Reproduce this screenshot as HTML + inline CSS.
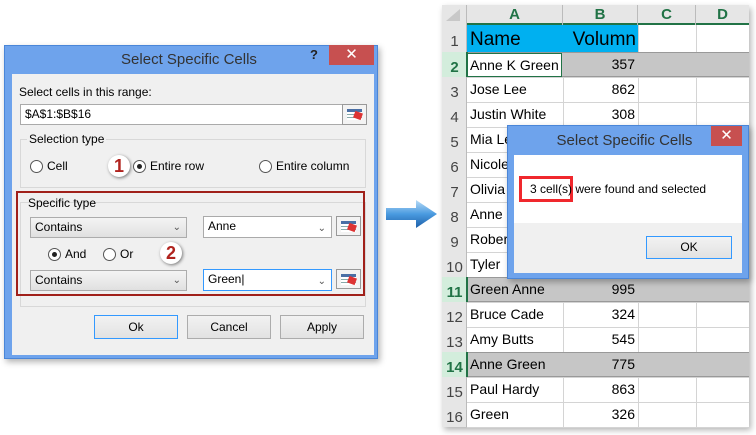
<!DOCTYPE html><html><head><style>
*{box-sizing:border-box;margin:0;padding:0}
body{width:756px;height:435px;background:#fff;position:relative;overflow:hidden;font-family:"Liberation Sans",sans-serif;font-size:12px;color:#000}
.a{position:absolute}
.sh{box-shadow:2px 3px 6px rgba(0,0,0,.3)}
.cell{font-size:14px;line-height:25px;padding-left:3px;white-space:nowrap;overflow:hidden}
.rh{color:#444;font-size:15px;text-align:center}
.num{text-align:right;padding-right:3px}
.rad{position:absolute;width:13px;height:13px;border:1px solid #555;border-radius:50%;background:#fff}
.rad.on::after{content:"";position:absolute;left:3px;top:3px;width:5px;height:5px;border-radius:50%;background:#222}
.inp{position:absolute;background:#fff;border:1px solid #aaa;padding-left:4px;line-height:19px}
.dd{position:absolute;background:linear-gradient(#f4f4f4,#e0e0e0);border:1px solid #acacac;padding-left:4px;line-height:19px}
.btn{position:absolute;background:linear-gradient(#f2f2f2,#e2e2e2);border:1px solid #acacac;text-align:center;line-height:22px}
.ic{position:absolute;width:25px;height:20px;border:1px solid #999;background:#f3f3f3}
.ic i{position:absolute;left:4px;top:4px;width:15px;height:11px;background:linear-gradient(#4a6fa5 0 3px,#fff 3px 5px,#8aa 5px 6px,#fff 6px 8px,#8aa 8px 9px,#fff 9px)}
.ic b{position:absolute;left:11px;top:7px;width:8px;height:7px;background:#d33;transform:rotate(20deg)}
.badge{position:absolute;width:22px;height:22px;border-radius:50%;background:#fff;box-shadow:1px 1px 3px rgba(0,0,0,.5);color:#b0231e;font-size:18px;font-weight:bold;text-align:center;line-height:22px}
.chev{position:absolute;right:5px;top:0;color:#555;font-size:10px}
</style></head><body>

<div class="a sh" style="left:442px;top:5px;width:307px;height:422px;background:#fff"></div>
<div class="a" style="left:442px;top:5px;width:307px;height:20px;background:#e6e6e6;border-bottom:2px solid #217346"></div>
<div class="a" style="left:442px;top:5px;width:25px;height:422px;background:#e6e6e6;border-right:1px solid #bbb"></div>
<div class="a" style="left:446px;top:9px;width:0;height:0;border-left:14px solid transparent;border-bottom:12px solid #c8c8c8"></div>
<div class="a" style="left:467px;top:5px;width:96px;line-height:20px;text-align:center;color:#217346;font-size:15px;font-weight:bold;border-right:1px solid #bbb">A</div>
<div class="a" style="left:563px;top:5px;width:75px;line-height:20px;text-align:center;color:#217346;font-size:15px;font-weight:bold;border-right:1px solid #bbb">B</div>
<div class="a" style="left:638px;top:5px;width:58px;line-height:20px;text-align:center;color:#217346;font-size:15px;font-weight:bold;border-right:1px solid #bbb">C</div>
<div class="a" style="left:696px;top:5px;width:53px;line-height:20px;text-align:center;color:#217346;font-size:15px;font-weight:bold">D</div>
<div class="a" style="left:467px;top:25px;width:171px;height:27px;background:#00b0f0"></div>
<div class="a" style="left:470px;top:25px;font-size:19px;line-height:29px">Name</div>
<div class="a" style="left:563px;top:25px;width:73px;font-size:19px;line-height:29px;text-align:right">Volumn</div>
<div class="a rh" style="left:442px;top:25px;width:25px;line-height:34px">1</div>
<div class="a" style="left:467px;top:52px;width:282px;height:1px;background:#ccc"></div>
<div class="a" style="left:638px;top:25px;width:1px;height:402px;background:#d4d4d4"></div>
<div class="a" style="left:696px;top:25px;width:1px;height:402px;background:#d4d4d4"></div>
<div class="a" style="left:563px;top:52px;width:1px;height:375px;background:#d4d4d4"></div>
<div id="rows"></div>
<script>
var d=[["Anne K Green",357,1],["Jose Lee",862],["Justin White",308],["Mia Lee",""],["Nicole",""],["Olivia",""],["Anne",""],["Robert",""],["Tyler",""],["Green Anne",995,1],["Bruce Cade",324],["Amy Butts",545],["Anne Green",775,1],["Paul Hardy",863],["Green",326]];
var h="";
d.forEach(function(r,i){var t=52+i*25,n=i+2,s=r[2];
if(s)h+='<div class="a" style="left:467px;top:'+t+'px;width:282px;height:25px;background:#c6c6c6;border-top:1px solid #999;border-bottom:1px solid #999"></div><div class="a" style="left:442px;top:'+t+'px;width:25px;height:25px;background:#d3eddc"></div><div class="a" style="left:466px;top:'+t+'px;width:2px;height:25px;background:#217346"></div>';
h+='<div class="a rh" style="left:442px;top:'+(t+3)+'px;width:25px;line-height:25px;'+(s?'color:#217346;font-weight:bold':'')+'">'+n+'</div>';
h+='<div class="a" style="left:467px;top:'+(t+25)+'px;width:282px;height:1px;background:#d4d4d4"></div>';
h+='<div class="a cell" style="left:467px;top:'+t+'px;width:96px">'+r[0]+'</div>';
h+='<div class="a cell num" style="left:563px;top:'+t+'px;width:75px">'+r[1]+'</div>';});
document.getElementById("rows").innerHTML=h;
</script>
<div class="a cell" style="left:467px;top:53px;width:95px;background:#fff;border:1px solid #217346;height:24px;line-height:22px;padding-left:2px">Anne K Green</div>

<div class="a sh" style="left:507px;top:125px;width:242px;height:154px;background:#6ea3ec;border:1px solid #4a86d8"></div>
<div class="a" style="left:507px;top:125px;width:235px;line-height:31px;text-align:center;font-size:15px;color:#333">Select Specific Cells</div>
<div class="a" style="left:711px;top:126px;width:31px;height:20px;background:#c75050;color:#fff;text-align:center;font-size:15px;line-height:20px">✕</div>
<div class="a" style="left:514px;top:155px;width:228px;height:118px;background:#f0f0f0"></div>
<div class="a" style="left:514px;top:155px;width:228px;height:68px;background:#fff"></div>
<div class="a" style="left:519px;top:176px;width:54px;height:26px;border:3px solid #f0282d"></div>
<div class="a" style="left:530px;top:182px;font-size:12px">3 cell(s) were found and selected</div>
<div class="btn" style="left:646px;top:236px;width:86px;height:23px;border-color:#3399ff;line-height:21px">OK</div>

<svg class="a" style="left:385px;top:199px" width="54" height="32"><defs><linearGradient id="g" x1="0" y1="0" x2="0" y2="1"><stop offset="0" stop-color="#b9dcf7"/><stop offset=".5" stop-color="#4a9be0"/><stop offset="1" stop-color="#1d5fa8"/></linearGradient></defs><path d="M1 9 H31 V1 L52 15 L31 29 V21 H1 Z" fill="url(#g)"/></svg>

<div class="a sh" style="left:4px;top:45px;width:374px;height:314px;background:#6ea3ec;border:1px solid #4a86d8"></div>
<div class="a" style="left:4px;top:45px;width:370px;line-height:30px;text-align:center;font-size:15px;color:#333">Select Specific Cells</div>
<div class="a" style="left:310px;top:47px;font-weight:bold;font-size:13px;color:#222">?</div>
<div class="a" style="left:329px;top:45px;width:45px;height:20px;background:#c75050;color:#fff;text-align:center;font-size:15px;line-height:20px">✕</div>
<div class="a" style="left:12px;top:74px;width:362px;height:281px;background:#f0f0f0"></div>
<div class="a" style="left:19px;top:85px">Select cells in this range:</div>
<div class="inp" style="left:20px;top:104px;width:347px;height:21px">$A$1:$B$16</div>
<div class="ic" style="left:342px;top:104px;width:25px;height:21px"><i></i><b></b></div>
<div class="a" style="left:20px;top:139px;width:346px;height:49px;border:1px solid #d8d8d8"></div>
<div class="a" style="left:27px;top:132px;background:#f0f0f0;padding:0 2px">Selection type</div>
<div class="rad" style="left:30px;top:160px"></div><div class="a" style="left:47px;top:159px">Cell</div>
<div class="badge" style="left:108px;top:155px">1</div>
<div class="rad on" style="left:133px;top:160px"></div><div class="a" style="left:150px;top:159px">Entire row</div>
<div class="rad" style="left:259px;top:160px"></div><div class="a" style="left:276px;top:159px">Entire column</div>
<div class="a" style="left:20px;top:202px;width:346px;height:105px;border:1px solid #d8d8d8"></div>
<div class="a" style="left:16px;top:191px;width:349px;height:105px;border:2px solid #a0201a"></div>
<div class="a" style="left:28px;top:196px">Specific type</div>
<div class="dd" style="left:30px;top:217px;width:157px;height:21px">Contains<span class="chev">⌄</span></div>
<div class="inp" style="left:203px;top:216px;width:129px;height:22px">Anne<span class="chev" style="top:2px">⌄</span></div>
<div class="ic" style="left:336px;top:216px"><i></i><b></b></div>
<div class="rad on" style="left:48px;top:248px"></div><div class="a" style="left:65px;top:247px">And</div>
<div class="rad" style="left:103px;top:248px"></div><div class="a" style="left:120px;top:247px">Or</div>
<div class="badge" style="left:160px;top:242px">2</div>
<div class="dd" style="left:30px;top:270px;width:157px;height:21px">Contains<span class="chev">⌄</span></div>
<div class="inp" style="left:203px;top:269px;width:129px;height:22px;border-color:#3399ff">Green|<span class="chev" style="top:2px">⌄</span></div>
<div class="ic" style="left:336px;top:269px"><i></i><b></b></div>
<div class="btn" style="left:94px;top:315px;width:84px;height:24px;border-color:#3399ff">Ok</div>
<div class="btn" style="left:187px;top:315px;width:84px;height:24px">Cancel</div>
<div class="btn" style="left:280px;top:315px;width:84px;height:24px">Apply</div>
</body></html>
